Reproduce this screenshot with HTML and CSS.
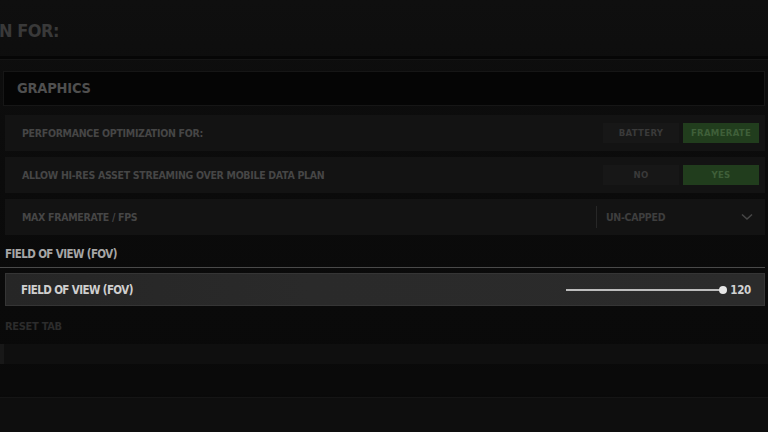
FILE: index.html
```html
<!DOCTYPE html>
<html>
<head>
<meta charset="utf-8">
<link rel="stylesheet" href="styles.css">
</head>
<body>
<div class="screen">
  <div class="title">N FOR:</div>
  <div class="rule-top"></div>
  <section class="panel">
    <div class="panel-head">GRAPHICS</div>
    <div class="rows">
      <div class="row">
        <span class="label">PERFORMANCE OPTIMIZATION FOR:</span>
        <div class="toggle">
          <span class="opt">BATTERY</span>
          <span class="opt on">FRAMERATE</span>
        </div>
      </div>
      <div class="row">
        <span class="label">ALLOW HI-RES ASSET STREAMING OVER MOBILE DATA PLAN</span>
        <div class="toggle">
          <span class="opt">NO</span>
          <span class="opt on">YES</span>
        </div>
      </div>
      <div class="row">
        <span class="label">MAX FRAMERATE / FPS</span>
        <div class="select">
          <span class="sel-val">UN-CAPPED</span>
          <svg class="chev" width="12" height="8" viewBox="0 0 12 8"><path d="M1 1.5 L6 6 L11 1.5" fill="none" stroke="#464646" stroke-width="1.6"/></svg>
        </div>
      </div>
    </div>
  </section>
  <div class="sec-head">FIELD OF VIEW (FOV)</div>
  <div class="sec-rule"></div>
  <div class="fov-row">
    <span class="fov-label">FIELD OF VIEW (FOV)</span>
    <div class="slider">
      <div class="track"><span class="knob"></span></div>
      <span class="val">120</span>
    </div>
  </div>
  <div class="reset">RESET TAB</div>
  <div class="band b1"></div>
  <div class="band b2"></div>
  <div class="band b3"></div>
</div>
</body>
</html>
```
FILE: styles.css
```css
html, body {
  margin: 0;
  padding: 0;
  background: #0b0b0b;
}
.screen {
  width: 768px;
  height: 432px;
  overflow: hidden;
  background: linear-gradient(180deg, #0f0f0f 0%, #0b0b0b 40%, #090909 100%);
  font-family: "DejaVu Sans Condensed", "DejaVu Sans", sans-serif;
  font-stretch: condensed;
  font-weight: bold;
  display: flex;
  flex-direction: column;
}
.title {
  margin-top: 20px;
  height: 22px;
  line-height: 22px;
  font-size: 18px;
  color: #393939;
  letter-spacing: -0.5px;
  margin-left: -1px;
}
.rule-top {
  margin-top: 14px;
  height: 3px;
  background: #060606;
  border-bottom: 1px solid #151515;
}
.panel {
  margin: 11px 3px 0 3px;
}
.panel-head {
  height: 33px;
  line-height: 33px;
  padding-left: 13px;
  font-size: 14.5px;
  color: #4f4f4f;
  background: #050505;
  border: 1px solid #161616;
  letter-spacing: -0.2px;
}
.rows {
  display: flex;
  flex-direction: column;
  gap: 6px;
  margin-top: 9px;
  padding-left: 2px;
}
.row {
  height: 36px;
  display: flex;
  align-items: center;
  justify-content: space-between;
  background: #131313;
  padding: 0 6px 0 17px;
}
.label {
  font-size: 10.5px;
  color: #464646;
  letter-spacing: -0.3px;
}
.toggle {
  display: flex;
  gap: 4px;
}
.opt {
  width: 76px;
  height: 20px;
  line-height: 20px;
  text-align: center;
  font-size: 9.5px;
  letter-spacing: 0.3px;
  color: #3a3a3a;
  background: #171717;
}
.opt.on {
  background: #213d1d;
  color: #3f5f39;
}
.select {
  width: 165px;
  height: 22px;
  display: flex;
  align-items: center;
  justify-content: space-between;
  border-left: 1px solid #272727;
  padding: 0 8px 0 9px;
  box-sizing: border-box;
  margin-right: -2px;
}
.sel-val {
  font-size: 10.5px;
  color: #3e3e3e;
  letter-spacing: -0.3px;
}
.sec-head {
  margin-top: 11px;
  padding-left: 5px;
  font-size: 11.5px;
  line-height: 16px;
  color: #a6a6a6;
  letter-spacing: -0.6px;
}
.sec-rule {
  margin-top: 5px;
  height: 1px;
  margin-right: 3px;
  background: #4a4a4a;
}
.fov-row {
  margin: 6px 3px 0 5px;
  height: 36px;
  display: flex;
  align-items: center;
  justify-content: space-between;
  background: linear-gradient(90deg, #262626 0%, #2a2a2a 40%, #2b2b2b 100%);
  border: 1px solid #353535;
  padding: 0 13px 0 15px;
}
.fov-label {
  font-size: 11.5px;
  color: #cfcfcf;
  letter-spacing: -0.6px;
}
.slider {
  display: flex;
  align-items: center;
  gap: 5px;
}
.track {
  position: relative;
  width: 157px;
  height: 2px;
  background: #bdbdbd;
}
.knob {
  position: absolute;
  right: -4px;
  top: -3px;
  width: 8px;
  height: 8px;
  border-radius: 50%;
  background: #e6e6e6;
}
.val {
  font-size: 11.5px;
  color: #d2d2d2;
  margin-left: 2px;
  letter-spacing: -0.3px;
}
.reset {
  margin-top: 14px;
  padding-left: 5px;
  font-size: 11px;
  color: #2c2c2c;
  letter-spacing: -0.3px;
}
.b1 {
  margin-top: 11px;
  height: 24px;
  background: #0f0f0f;
  border-left: 4px solid #181818;
}
.b2 {
  margin-top: 6px;
  height: 30px;
  background: #0a0a0a;
}
.b3 {
  margin-top: 2px;
  height: 40px;
  background: #0e0e0e;
  border-top: 1px solid #151515;
}
```
